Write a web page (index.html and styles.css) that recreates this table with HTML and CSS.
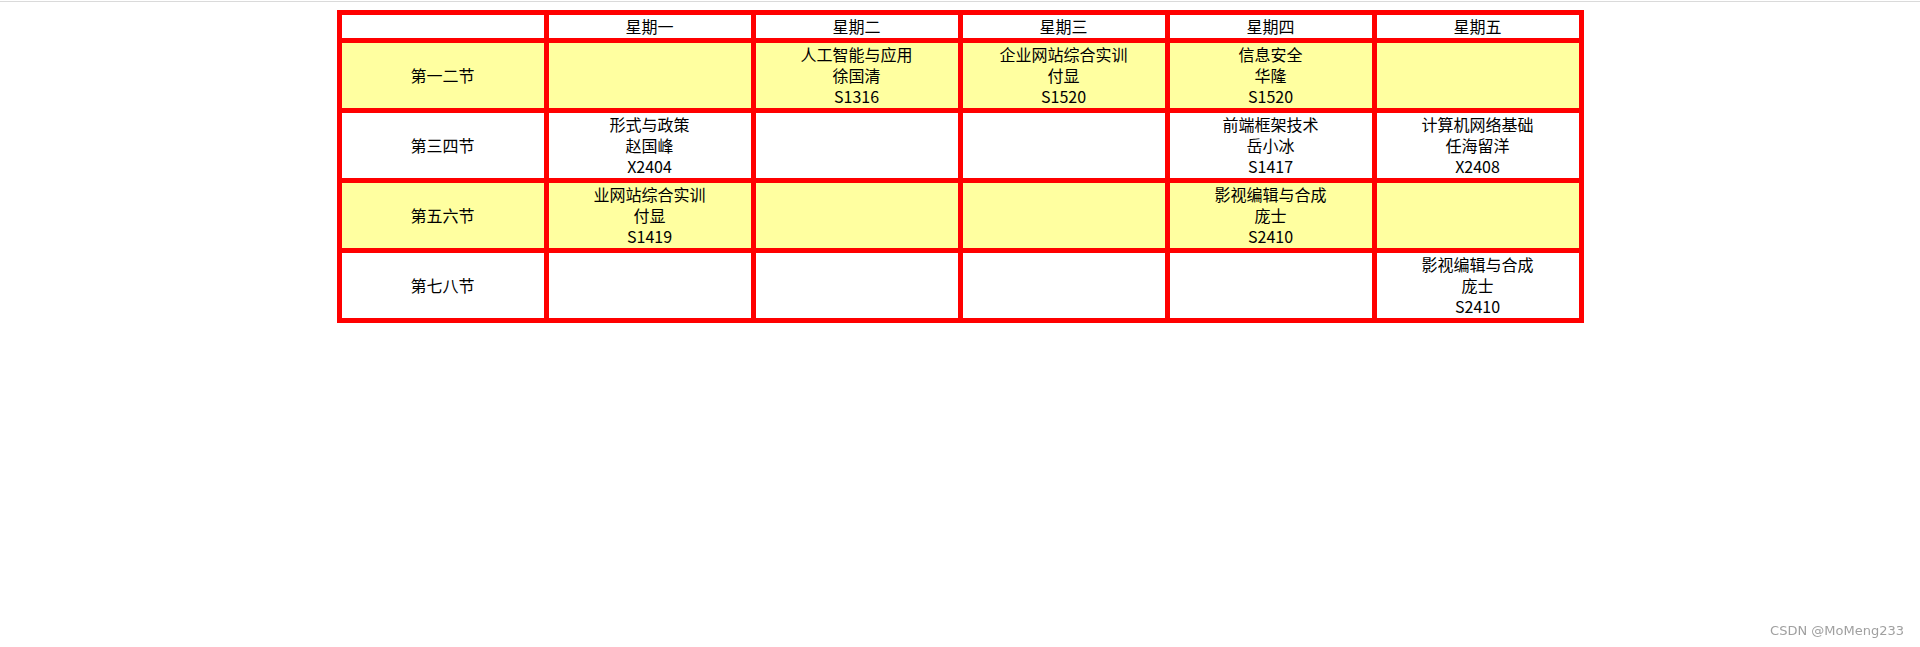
FILE: index.html
```html
<!DOCTYPE html>
<html lang="zh-CN">
<head>
<meta charset="utf-8">
<title>课程表</title>
<link rel="stylesheet" href="styles.css">
</head>
<body>
<div class="topline"></div>
<div class="page">
  <table class="schedule">
    <tr class="head">
      <td></td>
      <td>星期一</td>
      <td>星期二</td>
      <td>星期三</td>
      <td>星期四</td>
      <td>星期五</td>
    </tr>
    <tr class="odd">
      <td>第一二节</td>
      <td></td>
      <td>人工智能与应用<br>徐国清<br>S1316</td>
      <td>企业网站综合实训<br>付显<br>S1520</td>
      <td>信息安全<br>华隆<br>S1520</td>
      <td></td>
    </tr>
    <tr>
      <td>第三四节</td>
      <td>形式与政策<br>赵国峰<br>X2404</td>
      <td></td>
      <td></td>
      <td>前端框架技术<br>岳小冰<br>S1417</td>
      <td>计算机网络基础<br>任海留洋<br>X2408</td>
    </tr>
    <tr class="odd">
      <td>第五六节</td>
      <td>业网站综合实训<br>付显<br>S1419</td>
      <td></td>
      <td></td>
      <td>影视编辑与合成<br>庞士<br>S2410</td>
      <td></td>
    </tr>
    <tr>
      <td>第七八节</td>
      <td></td>
      <td></td>
      <td></td>
      <td></td>
      <td>影视编辑与合成<br>庞士<br>S2410</td>
    </tr>
  </table>
</div>
<div class="watermark">CSDN @MoMeng233</div>
</body>
</html>
```

FILE: styles.css
```css
html, body {
  margin: 0;
  padding: 0;
  background: #fff;
}

body {
  font-family: "Noto Sans CJK SC", "Noto Sans", sans-serif;
  font-size: 16px;
  color: #000;
}

.topline {
  height: 1px;
  margin-top: 1px;
  background: #dadada;
}

.page {
  padding: 8px 8px 0;
}

.schedule {
  margin: 0 auto;
  width: 1247px;
  table-layout: fixed;
  border-collapse: separate;
  border-spacing: 0;
  border-top: 5px solid #ff0000;
  border-left: 5px solid #ff0000;
}

.schedule td {
  border-right: 5px solid #ff0000;
  border-bottom: 5px solid #ff0000;
  padding: 1px;
  line-height: 21px;
  text-align: center;
  vertical-align: middle;
}

.schedule .odd td {
  background: #ffffa0;
}

.watermark {
  position: fixed;
  right: 16px;
  bottom: 8px;
  font-family: "DejaVu Sans", sans-serif;
  font-size: 13px;
  line-height: 16px;
  color: #a0a0a0;
}
```
